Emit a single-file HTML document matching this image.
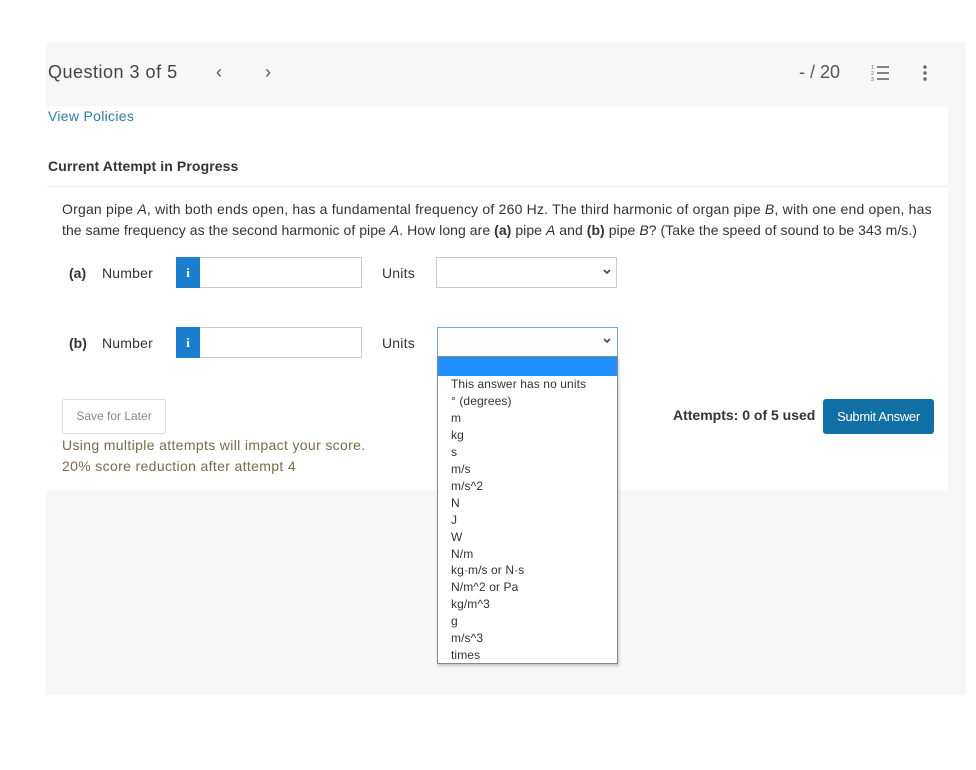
<!DOCTYPE html>
<html><head><meta charset="utf-8">
<style>
*{margin:0;padding:0;box-sizing:border-box}
body{width:976px;height:770px;background:#fff;font-family:"Liberation Sans",sans-serif;color:#333;position:relative;overflow:hidden}
.a{position:absolute;white-space:nowrap}
</style></head><body>
<div class="a" style="left:46px;top:42px;width:920px;height:653px;background:#f7f7f7"></div>
<div class="a" style="left:46px;top:106px;width:902px;height:384px;background:#fff"></div>
<div class="a" style="left:46px;top:186px;width:902px;height:1px;background:#eee"></div>

<div class="a" style="left:48px;top:62px;font-size:18px;color:#444;letter-spacing:0.5px">Question 3 of 5</div>
<div class="a" style="left:216px;top:62px;font-size:18px;color:#555">&#8249;</div>
<div class="a" style="left:265px;top:62px;font-size:18px;color:#555">&#8250;</div>
<div class="a" style="left:799px;top:62px;font-size:18px;color:#555;letter-spacing:0px">- / 20</div>
<svg class="a" style="left:870px;top:64px" width="20" height="18" viewBox="0 0 20 18"><g stroke="#666" stroke-width="1.6"><line x1="7" y1="3" x2="19" y2="3"/><line x1="7" y1="9" x2="19" y2="9"/><line x1="7" y1="15" x2="19" y2="15"/></g><g fill="#666" font-size="5" font-family="Liberation Sans"><text x="1" y="5">1</text><text x="1" y="11">2</text><text x="1" y="17">3</text></g></svg>
<svg class="a" style="left:922px;top:64px" width="6" height="18"><circle cx="3" cy="3" r="1.7" fill="#666"/><circle cx="3" cy="9" r="1.7" fill="#666"/><circle cx="3" cy="15" r="1.7" fill="#666"/></svg>

<div class="a" style="left:48px;top:108px;font-size:14px;color:#2a7bb0;letter-spacing:0.3px">View Policies</div>
<div class="a" style="left:48px;top:158px;font-size:14px;font-weight:bold;color:#333;letter-spacing:0.1px">Current Attempt in Progress</div>

<div class="a" style="left:62px;top:199px;font-size:14px;color:#333;letter-spacing:0.2px;line-height:21px">Organ pipe <i>A</i>, with both ends open, has a fundamental frequency of 260 Hz. The third harmonic of organ pipe <i>B</i>, with one end open, has<br><span style="letter-spacing:0.05px">the same frequency as the second harmonic of pipe <i>A</i>. How long are <b>(a)</b> pipe <i>A</i> and <b>(b)</b> pipe <i>B</i>? (Take the speed of sound to be 343 m/s.)</span></div>

<div class="a" style="left:69px;top:265px;font-size:14px"><b>(a)</b></div>
<div class="a" style="left:102px;top:265px;font-size:14px;letter-spacing:0.2px">Number</div>
<div class="a" style="left:176px;top:257px;width:186px;height:31px;border:1px solid #ccc;background:#fff"></div>
<div class="a" style="left:176px;top:257px;width:24px;height:31px;background:#1a7fd0;color:#fff;font-weight:bold;font-size:13px;text-align:center;line-height:31px;font-family:'Liberation Serif',serif">i</div>
<div class="a" style="left:382px;top:265px;font-size:14px;letter-spacing:0.2px">Units</div>
<div class="a" style="left:436px;top:257px;width:181px;height:31px;border:1px solid #ccc;background:#fff"></div>
<svg class="a" style="left:603px;top:269px" width="8" height="6"><path d="M1 1 L4 4 L7 1" stroke="#444" stroke-width="1.6" fill="none"/></svg>

<div class="a" style="left:69px;top:335px;font-size:14px"><b>(b)</b></div>
<div class="a" style="left:102px;top:335px;font-size:14px;letter-spacing:0.2px">Number</div>
<div class="a" style="left:176px;top:327px;width:186px;height:31px;border:1px solid #ccc;background:#fff"></div>
<div class="a" style="left:176px;top:327px;width:24px;height:31px;background:#1a7fd0;color:#fff;font-weight:bold;font-size:13px;text-align:center;line-height:31px;font-family:'Liberation Serif',serif">i</div>
<div class="a" style="left:382px;top:335px;font-size:14px;letter-spacing:0.2px">Units</div>
<div class="a" style="left:437px;top:327px;width:181px;height:30px;border:1px solid #7aa7d8;background:#fff"></div>
<svg class="a" style="left:603px;top:338px" width="8" height="6"><path d="M1 1 L4 4 L7 1" stroke="#444" stroke-width="1.6" fill="none"/></svg>

<div class="a" style="left:62px;top:399px;width:104px;height:35px;border:1px solid #ddd;border-radius:2px;background:#fff;font-size:12px;color:#888;text-align:center;line-height:33px">Save for Later</div>
<div class="a" style="left:62px;top:435px;font-size:14px;color:#7a6a4a;line-height:21px;letter-spacing:0.35px">Using multiple attempts will impact your score.<br>20% score reduction after attempt 4</div>

<div class="a" style="left:673px;top:407px;font-size:14px;font-weight:bold;color:#333;letter-spacing:0px">Attempts: 0 of 5 used</div>
<div class="a" style="left:823px;top:399px;width:111px;height:35px;background:#106fa5;border-radius:3px;color:#fff;font-size:13px;text-align:center;line-height:35px;letter-spacing:-0.3px">Submit Answer</div>

<div class="a" style="left:437px;top:356px;width:181px;height:308px;background:#fff;border:1px solid #888;box-shadow:1px 2px 3px rgba(0,0,0,.2)">
<div style="height:19px;background:#1e90ff;margin:0"></div>
<div style="padding-left:13px;padding-top:0px;font-size:12px;line-height:16.95px;color:#333;letter-spacing:0.1px">
This answer has no units<br>° (degrees)<br>m<br>kg<br>s<br>m/s<br>m/s^2<br>N<br>J<br>W<br>N/m<br>kg·m/s or N·s<br>N/m^2 or Pa<br>kg/m^3<br>g<br>m/s^3<br>times</div>
</div>
</body></html>
